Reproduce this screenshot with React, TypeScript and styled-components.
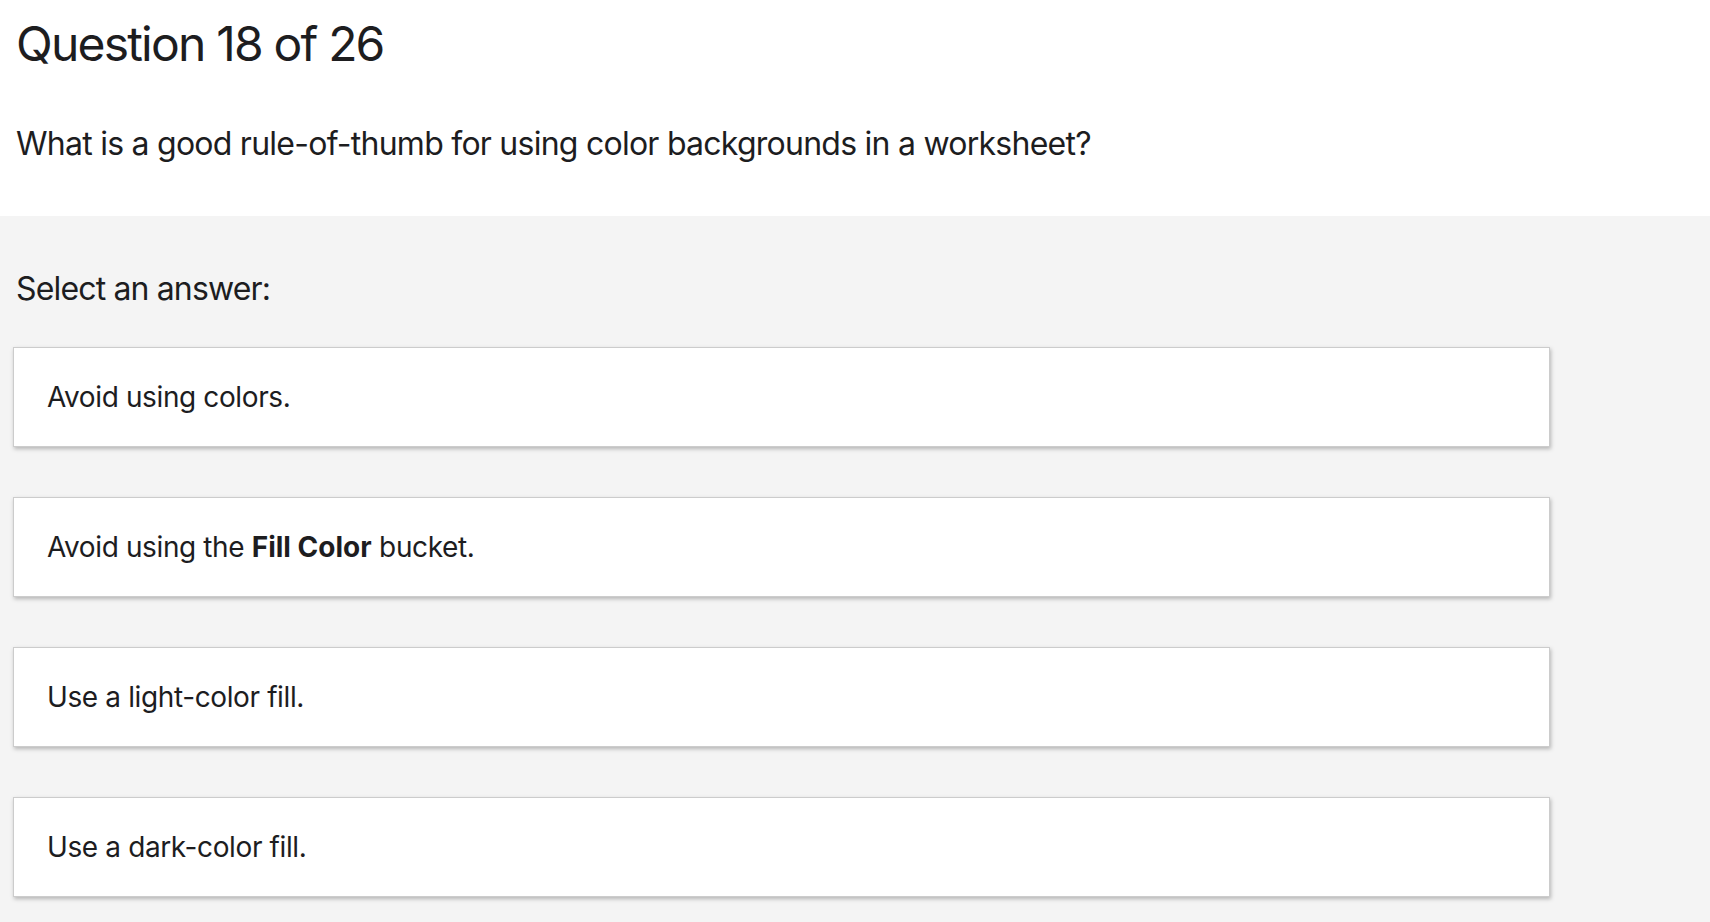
import React from "react";
import styled, { createGlobalStyle } from "styled-components";

const GlobalStyle = createGlobalStyle`
  html, body {
    margin: 0;
    padding: 0;
    background: #f4f4f4;
  }
  body {
    font-family: Inter, "Noto Sans", "Liberation Sans", sans-serif;
    color: #1d1d1f;
    -webkit-font-smoothing: antialiased;
  }
`;

const Page = styled.main`
  min-height: 100vh;
  display: flex;
  flex-direction: column;
  background: #f4f4f4;
`;

const Header = styled.header`
  background: #ffffff;
  padding: 15px 16px 53px 16px;
  display: flex;
  flex-direction: column;
  gap: 52px;
`;

const Title = styled.h1`
  margin: 0;
  font-size: 48px;
  line-height: 1.2;
  font-weight: 400;
  letter-spacing: -1.8px;
`;

const Prompt = styled.p`
  margin: 0;
  font-size: 32px;
  line-height: 1.2;
  font-weight: 400;
  letter-spacing: -0.75px;
`;

const Body = styled.section`
  padding: 54px 160px 30px 13px;
  display: flex;
  flex-direction: column;
`;

const Label = styled.h2`
  margin: 0 0 39px 3px;
  font-size: 32px;
  line-height: 1.2;
  font-weight: 400;
  letter-spacing: -0.85px;
`;

const Options = styled.div`
  display: flex;
  flex-direction: column;
  gap: 50px;
`;

const Option = styled.button`
  all: unset;
  box-sizing: border-box;
  height: 100px;
  display: flex;
  align-items: center;
  padding: 0 0 0 33px;
  background: #ffffff;
  border: 1px solid #cccccc;
  box-shadow: 1px 2px 4px rgba(0, 0, 0, 0.26);
  font-family: Inter, "Noto Sans", "Liberation Sans", sans-serif;
  font-size: 28px;
  line-height: 1.2;
  color: #1d1d1f;
  letter-spacing: -0.38px;
  cursor: pointer;
`;

const OptionText = styled.span`
  white-space: pre-wrap;
`;

const Strong = styled.strong`
  font-weight: 700;
  letter-spacing: 0;
`;

const answers: React.ReactNode[] = [
  "Avoid using colors.",
  <>
    {"Avoid using the "}
    <Strong>Fill Color</Strong>
    {" bucket."}
  </>,
  "Use a light-color fill.",
  "Use a dark-color fill.",
];

export default function App() {
  return (
    <>
      <GlobalStyle />
      <Page>
        <Header>
          <Title>Question 18 of 26</Title>
          <Prompt>
            What is a good rule-of-thumb for using color backgrounds in a
            worksheet?
          </Prompt>
        </Header>
        <Body>
          <Label>Select an answer:</Label>
          <Options>
            {answers.map((a, i) => (
              <Option key={i} type="button">
                <OptionText>{a}</OptionText>
              </Option>
            ))}
          </Options>
        </Body>
      </Page>
    </>
  );
}
